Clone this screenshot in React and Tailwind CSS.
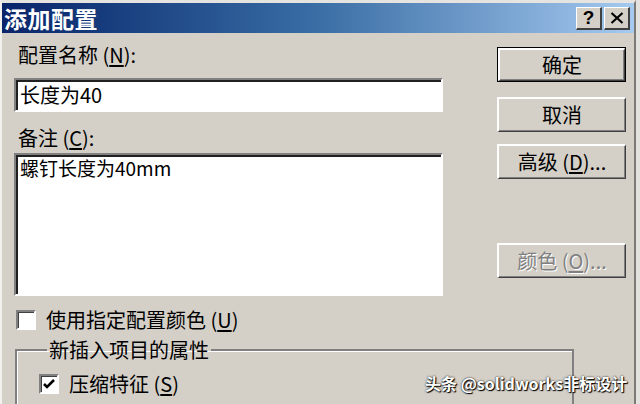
import React from "react";

const F = { fontFamily: '"Noto Sans CJK SC", "Noto Sans", sans-serif' };

function U({ children }) {
  return <span className="underline underline-offset-2">{children}</span>;
}

function Btn({ children, def, disabled, className = "" }) {
  const inner = (
    <div
      className={
        "h-full w-full flex items-center justify-center border-t-2 border-l-2 border-t-white border-l-white border-b border-r border-b-[#404040] border-r-[#404040] shadow-[inset_-1px_-1px_0_#808080] text-[20px] leading-none " +
        (disabled ? "text-[#808080] [text-shadow:1px_1px_0_#ffffff]" : "text-black")
      }
    >
      {children}
    </div>
  );
  return (
    <div className={"w-[129px] h-[35px] " + (def ? "border border-black " : "") + className}>
      {inner}
    </div>
  );
}

function CheckBox({ checked }) {
  return (
    <div className="w-[20px] h-[20px] bg-white border-t-2 border-l-2 border-t-[#808080] border-l-[#808080] border-b-2 border-r-2 border-b-white border-r-white shadow-[inset_1px_1px_0_#404040] flex items-center justify-center shrink-0">
      {checked && (
        <svg width="14" height="12" viewBox="0 0 14 12">
          <polyline points="2,6 5,9 12,2" fill="none" stroke="#000" strokeWidth="2.6" />
        </svg>
      )}
    </div>
  );
}

export default function App() {
  return (
    <div className="relative w-[640px] h-[404px] overflow-hidden bg-[#e4e2de]" style={F}>
      <div className="w-[636px] h-[404px] bg-[#d4d0c8] border-t-[3px] border-t-[#e6e4e0] border-l-2 border-l-[#f2f1ee] border-r-2 border-r-[#7c7a76] flex flex-col">
        {/* Title bar */}
        <div className="h-[30px] shrink-0 flex items-center justify-between pl-[2px] pr-[4px] bg-gradient-to-r from-[#0a246a] via-[#3a6ea5] to-[#a6caf0]">
          <div className="text-white font-bold text-[23px] leading-none tracking-[0.5px]">添加配置</div>
          <div className="flex gap-[2px]">
            <div className="w-[26px] h-[23px] bg-[#d4d0c8] border-t border-l border-t-white border-l-white border-b-2 border-r-2 border-b-[#404040] border-r-[#404040] flex items-center justify-center text-black font-bold text-[19px] leading-none" style={{ fontFamily: '"Liberation Sans", sans-serif' }}>?</div>
            <div className="w-[26px] h-[23px] bg-[#d4d0c8] border-t border-l border-t-white border-l-white border-b-2 border-r-2 border-b-[#404040] border-r-[#404040] flex items-center justify-center">
              <svg width="14" height="12" viewBox="0 0 14 12">
                <path d="M1.5 1 L12.5 11 M12.5 1 L1.5 11" stroke="#000" strokeWidth="2.2" />
              </svg>
            </div>
          </div>
        </div>

        {/* Main row */}
        <div className="flex pl-[12px]">
          <div className="w-[429px] pt-[10px] flex flex-col">
            <div className="h-[24px] pl-[4px] text-[20px] leading-[24px] text-black">配置名称 (<U>N</U>):</div>
            <div className="mt-[11px] h-[34px] bg-white border-t-2 border-l-2 border-t-[#808080] border-l-[#808080] border-b-2 border-r-2 border-b-white border-r-white shadow-[inset_2px_2px_0_#202020] pl-[4px] flex items-center text-[20px] leading-none text-black">
              长度为40
            </div>
            <div className="mt-[14px] h-[24px] pl-[4px] text-[20px] leading-[24px] text-black">备注 (<U>C</U>):</div>
            <div className="mt-[3px] h-[143px] bg-white border-t-2 border-l-2 border-t-[#808080] border-l-[#808080] border-b-2 border-r-2 border-b-white border-r-white shadow-[inset_2px_2px_0_#202020] pl-[4px] pt-[2px] text-[19px] leading-[22px] text-black">
              螺钉长度为40mm
            </div>
          </div>
          <div className="ml-[54px] pt-[14px] flex flex-col">
            <Btn def>确定</Btn>
            <Btn className="mt-[15px]">取消</Btn>
            <Btn className="mt-[12px]">
              <span>高级 (<U>D</U>)...</span>
            </Btn>
            <Btn disabled className="mt-[64px]">
              <span>颜色 (<U>O</U>)...</span>
            </Btn>
          </div>
        </div>

        {/* Checkbox */}
        <div className="mt-[12px] ml-[14px] flex items-center h-[24px]">
          <CheckBox />
          <span className="ml-[10px] text-[20px] leading-[24px] text-black">使用指定配置颜色 (<U>U</U>)</span>
        </div>

        {/* Group box */}
        <fieldset className="mt-[6px] ml-[13px] w-[559px] h-[80px] border-t-2 border-l-2 border-r-2 border-t-[#808080] border-l-[#808080] border-r-[#808080] shadow-[inset_1px_1px_0_#ffffff] px-[22px]">
          <legend className="ml-[8px] px-[2px] text-[20px] leading-[24px] text-black">新插入项目的属性</legend>
          <div className="mt-[10px] flex items-center h-[24px]">
            <CheckBox checked />
            <span className="ml-[10px] text-[20px] leading-[24px] text-black">压缩特征 (<U>S</U>)</span>
          </div>
        </fieldset>
      </div>

      {/* watermark */}
      <div className="absolute left-[425px] top-[372px] text-white text-[16px] leading-[22px] font-bold [text-shadow:1px_1px_1px_#000,0_0_2px_#000]">
        头条 @solidworks非标设计
      </div>
    </div>
  );
}
